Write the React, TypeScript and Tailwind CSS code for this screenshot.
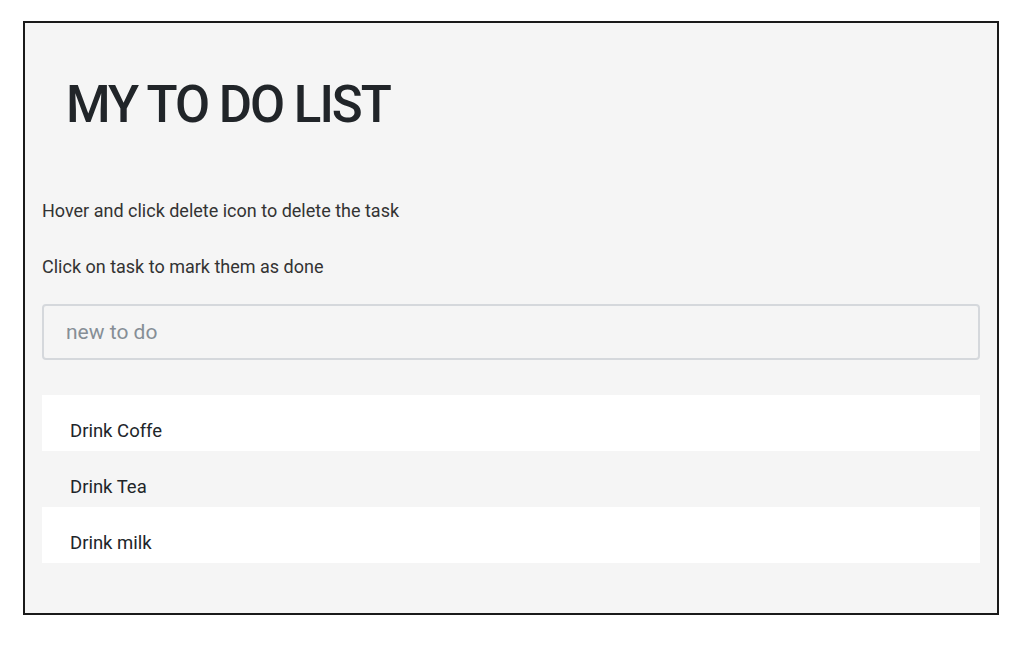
import { useState } from 'react';

interface Task {
  text: string;
  done: boolean;
}

export default function App() {
  const [tasks, setTasks] = useState<Task[]>([
    { text: 'Drink Coffe', done: false },
    { text: 'Drink Tea', done: false },
    { text: 'Drink milk', done: false },
  ]);
  const [draft, setDraft] = useState('');

  const toggle = (index: number) => {
    setTasks(tasks.map((t, i) => (i === index ? { ...t, done: !t.done } : t)));
  };

  return (
    <div className="min-h-[655px] bg-white pt-[21px] pl-[23px]" style={{ fontFamily: 'Roboto, "Open Sans", sans-serif' }}>
      <div className="w-[976px] h-[594px] border-2 border-[#1a1a1a] bg-[#f5f5f5] px-[17px]">
        <h1 className="pl-6 pt-[42px] text-[51px] leading-[80px] font-medium text-[#212529] tracking-[-2px]">
          MY TO DO LIST
        </h1>
        <p className="mt-[54px] text-[18px] leading-6 text-[#333]">Hover and click delete icon to delete the task</p>
        <p className="mt-[32px] text-[18px] leading-6 text-[#333]">Click on task to mark them as done</p>
        <input
          value={draft}
          onChange={(e) => setDraft(e.target.value)}
          placeholder="new to do"
          className="mt-[25px] w-full h-[56px] px-[22px] rounded border-2 border-[#d5d8dc] bg-[#f5f5f5] text-[21px] text-[#333] placeholder:text-[#868e96] outline-none"
        />
        <ul className="mt-[35px]">
          {tasks.map((task, index) => (
            <li
              key={index}
              onClick={() => toggle(index)}
              className={`h-[56px] pt-6 px-7 text-[18.5px] leading-6 text-[#212529] cursor-pointer ${
                index % 2 === 0 ? 'bg-white' : 'bg-[#f5f5f5]'
              } ${task.done ? 'line-through text-gray-400' : ''}`}
            >
              {task.text}
            </li>
          ))}
        </ul>
      </div>
    </div>
  );
}
